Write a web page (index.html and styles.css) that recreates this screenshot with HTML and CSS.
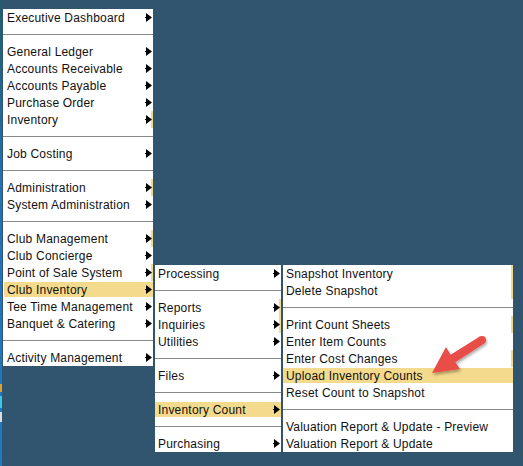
FILE: index.html
```html
<!DOCTYPE html>
<html lang="en">

<head>
  <meta charset="UTF-8" />
  <title>Club Inventory Menu</title>
  <link rel="stylesheet" href="styles.css">
</head>

<body>
  <div class="desktop">
    <div class="edge">
      <span class="tray tray-orange"></span>
      <span class="tray tray-cyan"></span>
      <span class="tray tray-white"></span>
    </div>

    <!-- main menu -->
    <div class="menu menu-main">
      <div class="item">Executive Dashboard<span class="arrow"></span></div>
      <div class="sep"></div>
      <div class="item">General Ledger<span class="arrow"></span></div>
      <div class="item">Accounts Receivable<span class="arrow"></span></div>
      <div class="item">Accounts Payable<span class="arrow"></span></div>
      <div class="item">Purchase Order<span class="arrow"></span></div>
      <div class="item tint">Inventory<span class="arrow"></span></div>
      <div class="sep"></div>
      <div class="item">Job Costing<span class="arrow"></span></div>
      <div class="sep"></div>
      <div class="item tint">Administration<span class="arrow"></span></div>
      <div class="item">System Administration<span class="arrow"></span></div>
      <div class="sep"></div>
      <div class="item tint">Club Management<span class="arrow"></span></div>
      <div class="item">Club Concierge<span class="arrow"></span></div>
      <div class="item tint">Point of Sale System<span class="arrow"></span></div>
      <div class="item active">Club Inventory<span class="arrow"></span></div>
      <div class="item">Tee Time Management<span class="arrow"></span></div>
      <div class="item">Banquet &amp; Catering<span class="arrow"></span></div>
      <div class="sep"></div>
      <div class="item">Activity Management<span class="arrow"></span></div>
    </div>

    <!-- club inventory submenu -->
    <div class="menu menu-sub">
      <div class="item">Processing<span class="arrow"></span></div>
      <div class="sep"></div>
      <div class="item tint">Reports<span class="arrow"></span></div>
      <div class="item tint">Inquiries<span class="arrow"></span></div>
      <div class="item">Utilities<span class="arrow"></span></div>
      <div class="sep"></div>
      <div class="item">Files<span class="arrow"></span></div>
      <div class="sep"></div>
      <div class="item active">Inventory Count<span class="arrow"></span></div>
      <div class="sep"></div>
      <div class="item">Purchasing<span class="arrow"></span></div>
    </div>

    <!-- inventory count submenu -->
    <div class="menu menu-count">
      <div class="item tint">Snapshot Inventory</div>
      <div class="item tint">Delete Snapshot</div>
      <div class="sep"></div>
      <div class="item tint">Print Count Sheets</div>
      <div class="item">Enter Item Counts</div>
      <div class="item tint">Enter Cost Changes</div>
      <div class="item active">Upload Inventory Counts</div>
      <div class="item">Reset Count to Snapshot</div>
      <div class="sep"></div>
      <div class="item">Valuation Report &amp; Update - Preview</div>
      <div class="item">Valuation Report &amp; Update</div>
    </div>

    <!-- callout arrow -->
    <svg class="callout" width="523" height="466" viewBox="0 0 523 466">
      <defs>
        <filter id="shadow" x="-20%" y="-20%" width="140%" height="140%">
          <feGaussianBlur in="SourceAlpha" stdDeviation="1.5" />
          <feOffset dx="1" dy="2" />
          <feComponentTransfer>
            <feFuncA type="linear" slope="0.35" />
          </feComponentTransfer>
          <feMerge>
            <feMergeNode />
            <feMergeNode in="SourceGraphic" />
          </feMerge>
        </filter>
      </defs>
      <g filter="url(#shadow)" fill="#e84e47">
        <polygon points="432,373 446,347 450.6,354.7 479.8,336.6 484.2,343.4 455.4,362.3 460,369" />
        <circle cx="482" cy="340" r="4" />
      </g>
    </svg>
  </div>
</body>

</html>
```

FILE: styles.css
```css
* {
  box-sizing: border-box;
}

html,
body {
  margin: 0;
  padding: 0;
}

body {
  font-family: 'Liberation Sans', Arial, sans-serif;
  font-size: 12px;
  letter-spacing: 0.2px;
  color: #111;
}

.desktop {
  position: relative;
  width: 523px;
  height: 466px;
  background-color: #32556f;
  overflow: hidden;
}

/* strip of the window behind, on the left */
.edge {
  width: 2px;
  height: 100%;
  background: linear-gradient(#1d5f6a, #2470b8 40%, #1f78c8);
  display: flex;
  flex-direction: column;
  padding-top: 384px;
  gap: 4px;
}

.tray {
  display: block;
  width: 2px;
  height: 8px;
}

.tray-orange {
  background-color: #e0a030;
}

.tray-cyan {
  background-color: #3cc8e8;
  height: 12px;
}

.tray-white {
  background-color: #d8dde2;
  height: 10px;
}

.menu {
  position: absolute;
  background-color: #fff;
  overflow: hidden;
}

.menu-main {
  left: 3px;
  top: 9px;
  width: 150px;
}

.menu-sub {
  left: 155px;
  top: 265px;
  width: 126px;
  height: 187px;
}

.menu-count {
  left: 283px;
  top: 265px;
  width: 230px;
  height: 187px;
}

.item {
  height: 17px;
  line-height: 15px;
  padding-top: 2px;
  padding-left: 4px;
  display: flex;
  align-items: center;
  white-space: nowrap;
}

.menu-sub .item,
.menu-count .item {
  padding-left: 3px;
}

.item.tint {
  box-shadow: inset -2px 0 0 #f3d98a;
}

.item.active {
  background-color: #f4da8c;
  border-top: 1px solid #fff;
  border-bottom: 1px solid #fff;
}

.menu-main .item.active {
  margin-left: 1px;
  padding-left: 3px;
}

.arrow {
  flex-shrink: 0;
  margin-left: auto;
  margin-right: 1px;
  margin-top: -2px;
  width: 7px;
  height: 9px;
  background-color: #000;
  clip-path: polygon(0 44%, 1px 44%, 1px 0, 100% 50%, 1px 100%, 1px 56%, 0 56%);
}

.sep {
  height: 17px;
  background: linear-gradient(transparent 8px, #8a8a8a 8px, #8a8a8a 9px, transparent 9px);
}

.callout {
  position: absolute;
  left: 0;
  top: 0;
  pointer-events: none;
}
```
